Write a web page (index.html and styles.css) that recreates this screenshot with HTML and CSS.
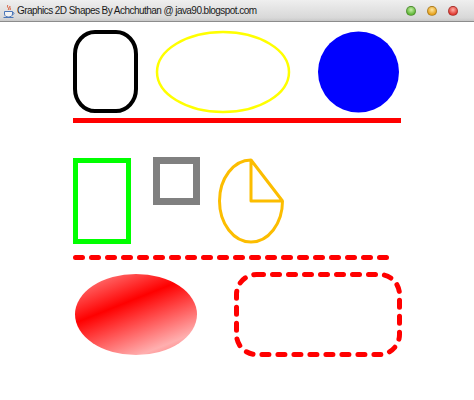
FILE: index.html
```html
<!DOCTYPE html>
<html lang="en">
<head>
  <meta charset="UTF-8">
  <title>Graphics 2D Shapes</title>
  <link rel="stylesheet" href="styles.css">
</head>
<body>
  <div class="window">
    <div class="titlebar">
      <div class="title">
        <svg class="app-icon" width="12" height="14" viewBox="0 0 12 14">
          <path d="M5 1 C3 3 7 4 5 6 M7 2 C6 3.5 8 4.5 7 6" fill="none" stroke="#d9502a" stroke-width="1"/>
          <path d="M1.5 7.5 H9.5 V10 C9.5 12 7.5 13 5.5 13 C3.5 13 1.5 12 1.5 10 Z" fill="#f3f3f3" stroke="#4a76b8" stroke-width="1"/>
          <path d="M9.5 8.2 C11.5 8.2 11.5 10.6 9.3 10.6" fill="none" stroke="#4a76b8" stroke-width="1"/>
          <path d="M0.5 13.5 H10.5" stroke="#4a76b8" stroke-width="1"/>
        </svg>
        <span>Graphics 2D Shapes By Achchuthan @ java90.blogspot.com</span>
      </div>
      <div class="buttons">
        <span class="dot green"></span>
        <span class="dot orange"></span>
        <span class="dot red"></span>
      </div>
    </div>

    <!-- drawing area, coordinates in window pixels -->
    <svg class="canvas" width="474" height="378" viewBox="0 22 474 378">
      <defs>
        <linearGradient id="redPink" gradientUnits="userSpaceOnUse" x1="120" y1="305" x2="140" y2="355" spreadMethod="reflect">
          <stop offset="0" stop-color="#ff0000"/>
          <stop offset="1" stop-color="#ffafaf"/>
        </linearGradient>
      </defs>

      <!-- row 1 -->
      <rect x="75" y="32" width="61" height="79" rx="20" ry="22" fill="none" stroke="#000" stroke-width="4"/>
      <ellipse cx="223" cy="72" rx="66" ry="40" fill="none" stroke="#ffff00" stroke-width="2.5"/>
      <circle cx="358.5" cy="72" r="40.5" fill="#0000ff"/>
      <line x1="73" y1="120.5" x2="401" y2="120.5" stroke="#ff0000" stroke-width="5"/>

      <!-- row 2 -->
      <rect x="75.5" y="160.5" width="53" height="81" fill="none" stroke="#00ff00" stroke-width="5"/>
      <rect x="156.5" y="160.5" width="40" height="41" fill="none" stroke="#808080" stroke-width="7"/>
      <path d="M251 160 A31.5 41 0 1 0 282.5 201 L251 201 Z M251 160 L282.5 201" fill="none" stroke="#fcbd00" stroke-width="3" stroke-linejoin="round"/>
      <line x1="75.5" y1="257.5" x2="391" y2="257.5" stroke="#ff0000" stroke-width="5" stroke-linecap="round" stroke-dasharray="7 9"/>

      <!-- row 3 -->
      <ellipse cx="136" cy="314.5" rx="61" ry="40.5" fill="url(#redPink)"/>
      <rect x="236.5" y="274.5" width="163" height="80" rx="20" ry="20" fill="none" stroke="#ff0000" stroke-width="5" stroke-linecap="round" stroke-dasharray="7 9"/>
    </svg>
  </div>
</body>
</html>
```

FILE: styles.css
```css
* {
  box-sizing: border-box;
  margin: 0;
  padding: 0;
}

body {
  background: #fff;
  font-family: "Liberation Sans", Arial, sans-serif;
  width: 474px;
  height: 400px;
  overflow: hidden;
}

.window {
  display: flex;
  flex-direction: column;
}

/* Title bar */
.titlebar {
  height: 22px;
  display: flex;
  align-items: center;
  justify-content: space-between;
  padding: 0 16px 0 3px;
  background: linear-gradient(to bottom, #efefef, #d8d8d8 85%, #c8c8c8);
  border-bottom: 1px solid #8c8c8c;
}

.title {
  display: flex;
  align-items: center;
  gap: 2px;
  color: #1a1a1a;
  font-size: 10px;
  letter-spacing: -0.55px;
}

.app-icon {
  display: block;
}

.buttons {
  display: flex;
  gap: 11px;
}

.dot {
  width: 10px;
  height: 10px;
  border-radius: 50%;
  border: 1px solid rgba(0, 0, 0, 0.25);
}

.dot.green {
  background: radial-gradient(circle at 50% 35%, #c8f0a8, #62b83a 70%);
}

.dot.orange {
  background: radial-gradient(circle at 50% 35%, #ffe6a0, #e6a21e 70%);
}

.dot.red {
  background: radial-gradient(circle at 50% 35%, #ffb0a8, #e03a32 70%);
}

.canvas {
  display: block;
}
```
